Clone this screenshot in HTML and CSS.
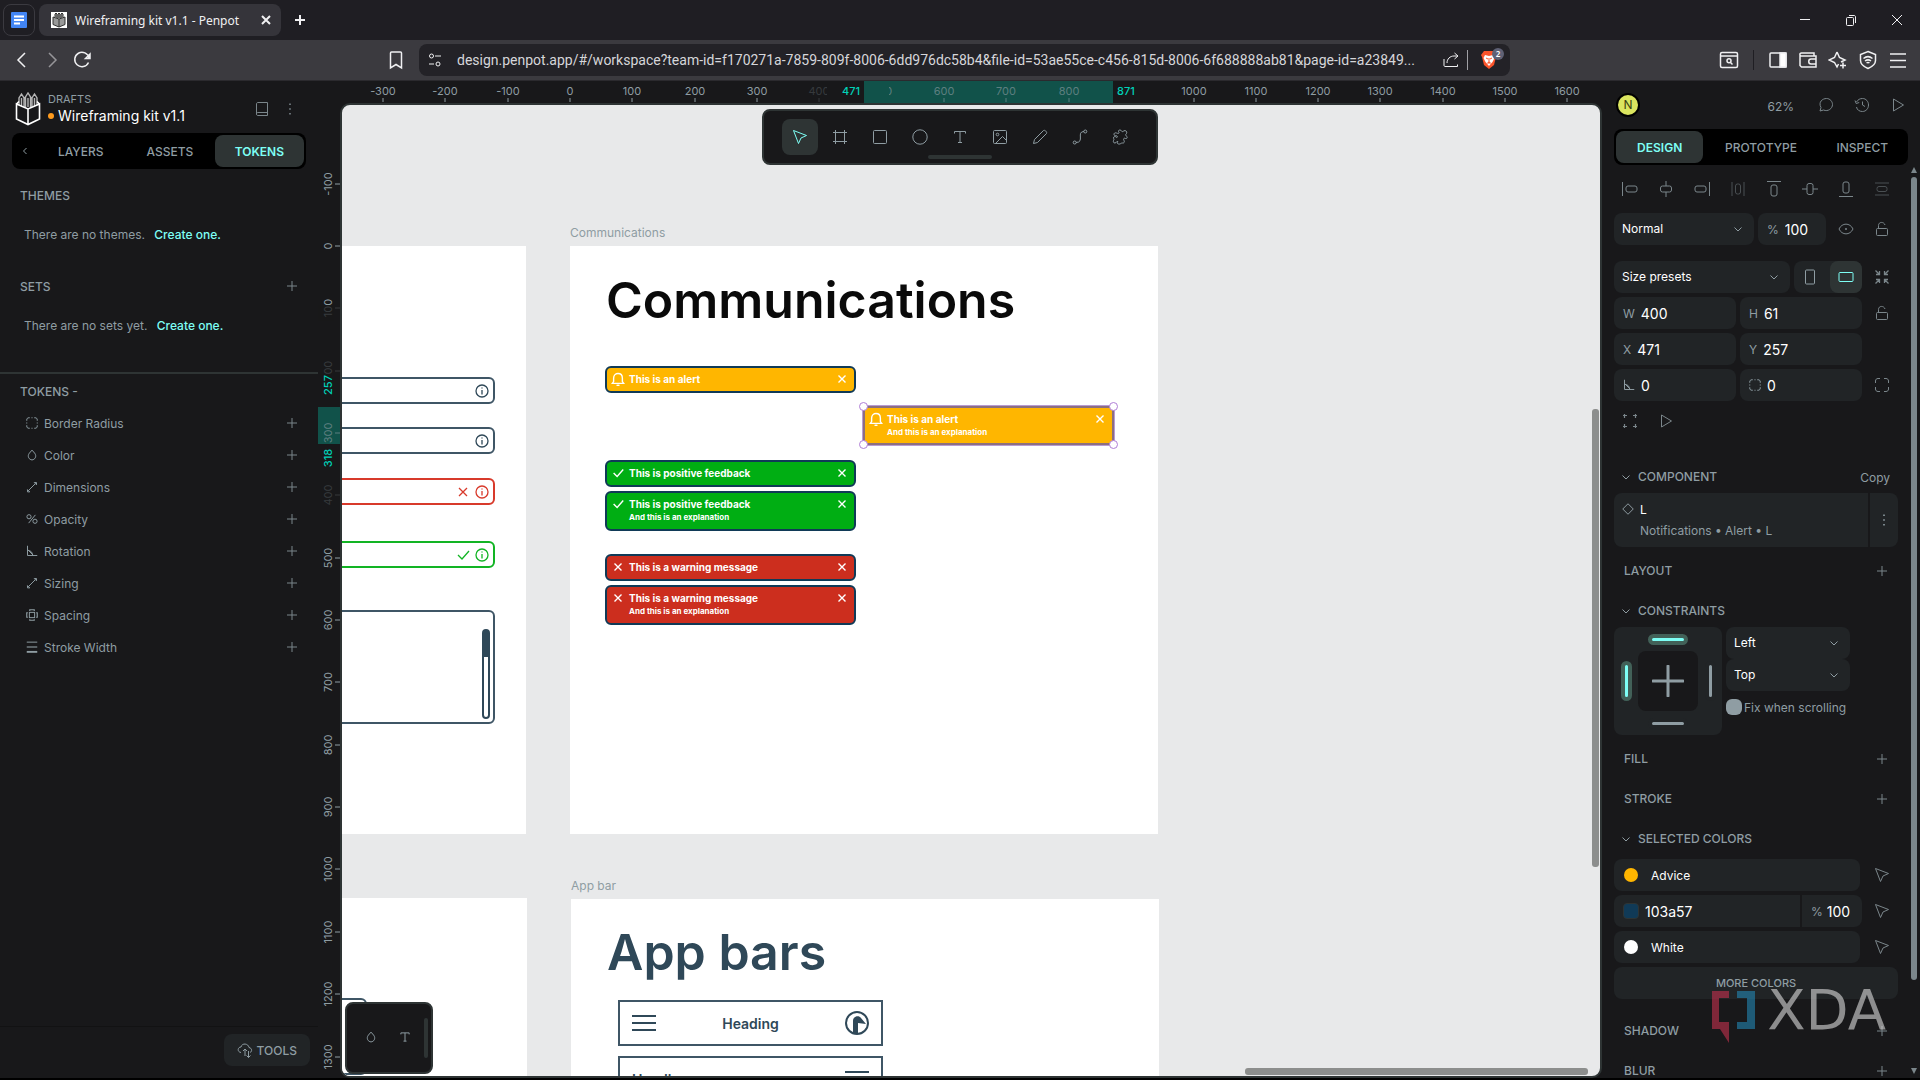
FILE: index.html
```html
<!DOCTYPE html>
<html lang="en">
<head>
    <meta charset="UTF-8">
    <meta name="viewport" content="width=device-width, initial-scale=1.0">
    <title>Wireframing kit v1.1 - Penpot</title>
    <link rel="stylesheet" href="styles.css">
</head>
<body>

    <!-- Shared icons -->
    <svg class="icon-defs" aria-hidden="true">
        <symbol id="i-plus" viewBox="0 0 16 16"><path d="M8 3v10M3 8h10"/></symbol>
        <symbol id="i-close" viewBox="0 0 16 16"><path d="M4 4l8 8M12 4l-8 8"/></symbol>
        <symbol id="i-check" viewBox="0 0 16 16"><path d="M3 8l4 4 7-8"/></symbol>
        <symbol id="i-down" viewBox="0 0 16 16"><path d="M4.500 6.500L8 10l3.500-3.500"/></symbol>
        <symbol id="i-left" viewBox="0 0 16 16"><path d="M9.500 5l-3 3 3 3"/></symbol>
        <symbol id="i-dots" viewBox="0 0 16 16"><path d="M8 2.500v1.500M8 7.200v1.500M8 12v1.500" stroke-width="1.600"/></symbol>
        <symbol id="i-book" viewBox="0 0 16 16"><path d="M2.500 13.500V3c0-1 .5-1.500 1.500-1.500h9.500v13H4c-1 0-1.500-.5-1.500-1.500s.5-1.500 1.500-1.500h9.500"/></symbol>
        <symbol id="i-radius" viewBox="0 0 16 16"><path d="M1 5V4c0-2 1-3 3-3h1M11 1h1c2 0 3 1 3 3v1M15 11v1c0 2-1 3-3 3h-1M5 15H4c-2 0-3-1-3-3v-1M1 7.300v1.400M15 7.300v1.400M7.300 1h1.400M7.300 15h1.400"/></symbol>
        <symbol id="i-corners" viewBox="0 0 16 16"><path d="M1.500 6V4C1.500 2.500 2.500 1.500 4 1.500h2M10 1.500h2c1.500 0 2.500 1 2.500 2.500v2M14.500 10v2c0 1.500-1 2.500-2.500 2.500h-2M6 14.500H4c-1.500 0-2.500-1-2.500-2.500v-2"/></symbol>
        <symbol id="i-drop" viewBox="0 0 16 16"><path d="M8 1.500l3.500 4C15 10 11.500 14.500 8 14.500S1 10 4.500 5.500z"/></symbol>
        <symbol id="i-line" viewBox="0 0 16 16"><path d="M3.500 12.500l9-9M2 11.500v3h3zM11 2h3v3z"/></symbol>
        <symbol id="i-percent" viewBox="0 0 16 16"><path d="M3.500 13.500l9-11"/><circle cx="4" cy="5" r="2.800"/><circle cx="12" cy="11" r="2.800"/></symbol>
        <symbol id="i-angle" viewBox="0 0 16 16"><path d="M2 1v13h13M2 7c4 0 7 3 7 7M2 6l8 8"/></symbol>
        <symbol id="i-spacing" viewBox="0 0 16 16"><rect x="4.500" y="4.500" width="7" height="7"/><path d="M5 2.500V1h6v1.500M5 13.500V15h6v-1.500M2.500 5H1v6h1.500M13.500 5H15v6h-1.500" stroke-width="1.500"/></symbol>
        <symbol id="i-strokes" viewBox="0 0 16 16"><path d="M1 1.500h14"/><path d="M1 8h14" stroke-width="1.500"/><path d="M1 14.500h14" stroke-width="2.500"/></symbol>
        <symbol id="i-cursor" viewBox="0 0 16 16"><path d="M1.500 1.500l13 5-5.500 2.500L6.500 14.500z"/></symbol>
        <symbol id="i-frame" viewBox="0 0 16 16"><path d="M3.500 1v14M12.500 1v14M1 3.500h14M1 12.500h14"/></symbol>
        <symbol id="i-rect" viewBox="0 0 16 16"><rect x="1.500" y="1.500" width="13" height="13" rx="1"/></symbol>
        <symbol id="i-circle" viewBox="0 0 16 16"><circle cx="8" cy="8" r="7.200"/></symbol>
        <symbol id="i-text" viewBox="0 0 16 16"><path d="M2.500 4.500v-2h11v2M8 2.500v11M6 13.500h4"/></symbol>
        <symbol id="i-image" viewBox="0 0 16 16"><rect x="1.500" y="1.500" width="13" height="13" rx="1"/><circle cx="5.500" cy="5.500" r="1.300"/><path d="M3.500 14.500l7-7 4 4"/></symbol>
        <symbol id="i-pencil" viewBox="0 0 16 16"><path d="M1.500 14.500l1-4 9-9c1-1 4 1.500 3 3l-9 9z"/></symbol>
        <symbol id="i-curve" viewBox="0 0 16 16"><path d="M4 13.500c9 0 0-11 8-11"/><circle cx="2.700" cy="13.500" r="1.500"/><circle cx="13.300" cy="2.500" r="1.500"/></symbol>
        <symbol id="i-puzzle" viewBox="0 0 16 16"><path d="M2 5.500c0-1.500 1-2 2.500-1.500 2 1 3.500 0 2-1.500C6 .8 9 .5 9.500 2c.5 1.200 1.500.5 2.500-.2 1.500-1 3.500 1 2.500 2.700-.7 1-1.500 1.500-.3 2.300C16 8 15 10 13.500 9.500c-1.500-1-2.500.5-1.500 2 .8 1.500 0 2.800-1.500 2.500-1.500-.2-2 1.500-4 1-1.500-.2-1.500-2-.7-2.500-1.500-.7-1.300 1.500-2.800 1.500-1.500.2-2-1.500-1.500-2.500 1-1.500 0-1.500 0-2.500 0-1.500 1.700-2 2.500-1 1.500 1.300 2-1 .5-1.300C3 6.700 2 6.500 2 5.500z"/></symbol>
        <symbol id="i-play" viewBox="0 0 16 16"><path d="M3.500 2v12l10-6z"/></symbol>
        <symbol id="i-bubble" viewBox="0 0 16 16"><path d="M2 14l1-3.500C0 5 4.500 1.500 8.500 1.500c3.500 0 6 3 6 6 0 4-4.500 7.500-9 5.500z"/></symbol>
        <symbol id="i-history" viewBox="0 0 16 16"><path d="M2.500 5C4 2.500 6 1.500 8.500 1.500c3.500 0 6 3 6 6.500s-2.500 6.500-6 6.500C5.500 14.500 3 13 2.500 10M1 3.500l1.200 3 3-1M8.500 4.500V8l2.500 1.500"/></symbol>
        <symbol id="i-eye" viewBox="0 0 16 16"><path d="M1 8c3-6.500 11-6.500 14 0-3 6.500-11 6.500-14 0z"/><circle cx="8" cy="8" r=".7"/></symbol>
        <symbol id="i-lock" viewBox="0 0 16 16"><rect x="2.500" y="7.500" width="11" height="7" rx="1"/><path d="M4.500 7.500V4.500c0-4 5.500-4 6.500-.5"/></symbol>
        <symbol id="i-al" viewBox="0 0 16 16"><path d="M.5 1v14"/><rect x="4" y="5" width="11" height="6" rx="2"/></symbol>
        <symbol id="i-ac" viewBox="0 0 16 16"><path d="M8 0v5M8 11v5"/><rect x="2.500" y="5" width="11" height="6" rx="2"/></symbol>
        <symbol id="i-dist" viewBox="0 0 16 16"><path d="M2 1v14M14 1v14"/><rect x="5.500" y="3" width="5" height="10" rx="2"/></symbol>
        <symbol id="i-phone" viewBox="0 0 16 16"><rect x="3.500" y="1" width="9" height="14" rx="1"/></symbol>
        <symbol id="i-shrink" viewBox="0 0 16 16"><path d="M1.500 1.500l4 4M5.500 2v3.500H2M14.500 1.500l-4 4M10.500 2v3.500H14M1.500 14.500l4-4M2 10.500h3.500V14M14.500 14.500l-4-4M14 10.500h-3.500V14" stroke-width="1.300"/></symbol>
        <symbol id="i-clip" viewBox="0 0 16 16"><path d="M1 2.500h4M2.500 1v4M11 2.500h4M13.500 1v4M1 13.500h4M2.500 11v4M11 13.500h4M13.500 11v4" stroke-width="1.200"/></symbol>
        <symbol id="i-diamond" viewBox="0 0 16 16"><path d="M8 1l7 7-7 7-7-7z"/></symbol>
        <symbol id="i-info" viewBox="0 0 16 16"><circle cx="8" cy="8" r="6"/><path d="M8 7v4.500M8 4.500v1"/></symbol>
        <symbol id="i-bell" viewBox="0 0 16 16"><path d="M1.500 13h13l-1.500-2V7c0-7-10-7-10 0v4zM6.500 14.500c1 1.200 2 1.200 3 0"/></symbol>
        <symbol id="i-cloud" viewBox="0 0 16 16"><path d="M4 10.500C0 10 .5 5 4 5c1-4.500 7.500-3.500 8 .5 3 .5 3.500 4 1 5M8 14V7M6 9l2-2 2 2M11.500 9v6.500M9.500 13.500l2 2 2-2"/></symbol>
        <symbol id="i-menu" viewBox="0 0 24 16"><path d="M0 1h24M0 8h24M0 15h24"/></symbol>
    </svg>

    <!-- Browser window -->
    <header class="browser">
        <div class="tab-strip">
            <button class="pinned-tab" aria-label="Docs">
                <svg width="16" height="16" viewBox="0 0 16 16"><rect width="16" height="16" rx="1" fill="#4285f4"/><path d="M3 4.500h10M3 8h10M3 11.500h6" stroke="#fff" stroke-width="2"/></svg>
            </button>
            <div class="tab">
                <svg width="16" height="16" viewBox="0 0 16 16"><rect width="16" height="16" fill="#fff"/><path d="M2 5l6 2 6-2v7.500L8 15l-6-2.500zM8 7v8M4 5V2l1-1 1 1v4M7 6V2l1-1 1 1v4M10 6V2l1-1 1 1v3" fill="#999" stroke="#333"/></svg>
                <span>Wireframing kit v1.1 - Penpot</span>
                <button class="chrome-btn" aria-label="Close tab"><svg class="icon bold"><use href="#i-close"/></svg></button>
            </div>
            <button class="chrome-btn" aria-label="New tab"><svg class="icon bold"><use href="#i-plus"/></svg></button>
            <div class="window-controls">
                <button class="chrome-btn" aria-label="Minimize"><svg class="icon" viewBox="0 0 16 16"><path d="M3 7.500h10"/></svg></button>
                <button class="chrome-btn" aria-label="Restore"><svg class="icon" viewBox="0 0 16 16"><rect x="3.500" y="5.500" width="7" height="8" rx="1"/><path d="M6 3.500h5c1 0 1.500.5 1.500 1.500v6"/></svg></button>
                <button class="chrome-btn" aria-label="Close window"><svg class="icon" viewBox="0 0 16 16"><path d="M3 3l10 10M13 3L3 13"/></svg></button>
            </div>
        </div>
        <div class="nav-bar">
            <div class="nav-buttons">
                <button class="chrome-btn" aria-label="Back"><svg class="icon nav" viewBox="0 0 20 20"><path d="M13 3l-7 7 7 7"/></svg></button>
                <button class="chrome-btn faded" aria-label="Forward"><svg class="icon nav" viewBox="0 0 20 20"><path d="M7 3l7 7-7 7"/></svg></button>
                <button class="chrome-btn" aria-label="Reload"><svg class="icon nav" viewBox="0 0 20 20"><path d="M16.500 12.500A7.200 7.200 0 1 1 17 8M18 4v4.500h-4.500z"/></svg></button>
            </div>
            <button class="chrome-btn" aria-label="Bookmark"><svg class="icon nav" viewBox="0 0 20 20"><path d="M4.500 3c0-.5.500-1 1-1h9c.500 0 1 .5 1 1v15L10 14.500 4.500 18z"/></svg></button>
            <div class="address">
                <svg class="icon" viewBox="0 0 16 16"><path d="M8 4h6M2 12h5"/><circle cx="4.500" cy="4" r="2"/><circle cx="11" cy="12" r="2"/></svg>
                <input class="url" type="text" aria-label="Address" value="design.penpot.app/#/workspace?team-id=f170271a-7859-809f-8006-6dd976dc58b4&amp;file-id=53ae55ce-c456-815d-8006-6f688888ab81&amp;page-id=a23849...">
                <button class="chrome-btn small" aria-label="Share"><svg class="icon" viewBox="0 0 16 16"><path d="M1 7v6.500c0 .5.500 1 1 1h12.500v-2M4 11c0-4 3-7 7-7h3.500M11.500 1L15 4l-3.500 3"/></svg></button>
                <span class="divider"></span>
                <button class="brave" aria-label="Shields">
                    <svg width="18" height="20" viewBox="0 0 18 20"><path d="M4 1h10l3 4-1 2-2 8-5 4-5-4-2-8-1-2z" fill="#fb542b"/><path d="M5 5l4 1 4-1 1.500 3-2 4-3.500 4-3.500-4-2-4z" fill="#fff"/><path d="M6 8l2 1M12 8l-2 1M9 8v4l-1.500 1h3L9 12" stroke="#fb542b" fill="none"/></svg>
                    <span class="brave-count">2</span>
                </button>
            </div>
            <div class="extensions">
                <button class="chrome-btn" aria-label="Search tabs"><svg class="icon nav" viewBox="0 0 20 20"><rect x="1.500" y="2.500" width="17" height="15" rx="1.500"/><path d="M1.500 6h17M11.500 12.500l2 2"/><circle cx="10" cy="10.700" r="2"/></svg></button>
                <span class="divider dark"></span>
                <button class="chrome-btn" aria-label="Sidebar"><svg class="icon nav" viewBox="0 0 20 20"><rect x="2" y="3" width="16" height="14" rx="1"/><path d="M12 3h6v14h-6z" fill="#fff"/></svg></button>
                <button class="chrome-btn" aria-label="Wallet"><svg class="icon nav" viewBox="0 0 20 20"><path d="M16 6V3H3.500C1 3 1.500 6 4 6h14v11H3.500L2 15.500V4.500M18 9h-5c-3 0-3 5 0 5h5"/></svg></button>
                <button class="chrome-btn" aria-label="Leo AI"><svg class="icon nav" viewBox="0 0 20 20"><path d="M9 2l2.500 5.500L17 10l-4 2M9 2L6.500 7.500 1 10l5.500 2.500L9 17l1.500-3M15 12.500v6M12 15.500h6"/></svg></button>
                <button class="chrome-btn" aria-label="VPN"><svg class="icon nav" viewBox="0 0 20 20"><path d="M10 1.500l7.500 3v6c0 4-4 6.500-7.500 8-3.500-1.500-7.500-4-7.500-8v-6zM5.500 8.500c3-2.500 6-2.500 9 0M7 11c2-1.500 4-1.500 6 0M8.500 13c1-.7 2-.7 3 0"/></svg></button>
                <button class="chrome-btn" aria-label="Menu"><svg class="icon nav" viewBox="0 0 20 20"><path d="M2 4h16M2 10.500h16M2 17h16"/></svg></button>
            </div>
        </div>
    </header>

    <main class="workspace">

        <!-- Left sidebar -->
        <aside class="left-sidebar">
            <div class="file-header">
                <svg class="logo" viewBox="0 0 26 34"><path d="M4 13V6l2.500-4L9 6v9M9 7l1.500-2M10.500 15.500V5L13 1l2.500 4v10.500M15.500 5L17 7M17 15V6l2.500-4L22 6v7M6.500 6v8M13 6v9M19.500 6v8" fill="none" stroke="#b5b5b5" stroke-width="1.400"/><path d="M1.500 12l11.500 5 11.500-5v15L13 32.500 1.500 27zM13 17v15M1.500 12L4 9.500M24.500 12L22 9.500" fill="none" stroke="#fff" stroke-width="1.600"/></svg>
                <div class="file-name">
                    <a class="project" href="#">DRAFTS</a>
                    <h1><span class="unsaved"></span>Wireframing kit v1.1</h1>
                </div>
                <button class="icon-btn" aria-label="Library"><svg class="icon"><use href="#i-book"/></svg></button>
                <button class="icon-btn" aria-label="File menu"><svg class="icon"><use href="#i-dots"/></svg></button>
            </div>
            <nav class="tabs">
                <button class="collapse" aria-label="Collapse"><svg class="icon"><use href="#i-left"/></svg></button>
                <button>LAYERS</button>
                <button>ASSETS</button>
                <button class="active">TOKENS</button>
            </nav>
            <section class="token-sets">
                <div class="side-title"><h2>THEMES</h2></div>
                <p class="empty">There are no themes. <a href="#">Create one.</a></p>
                <div class="side-title"><h2>SETS</h2><button class="icon-btn" aria-label="Add set"><svg class="icon"><use href="#i-plus"/></svg></button></div>
                <p class="empty">There are no sets yet. <a href="#">Create one.</a></p>
            </section>
            <section class="token-list">
                <h2>TOKENS -</h2>
                <ul>
                    <li><svg class="icon"><use href="#i-radius"/></svg><span>Border Radius</span><button class="icon-btn" aria-label="Add border radius"><svg class="icon"><use href="#i-plus"/></svg></button></li>
                    <li><svg class="icon"><use href="#i-drop"/></svg><span>Color</span><button class="icon-btn" aria-label="Add color"><svg class="icon"><use href="#i-plus"/></svg></button></li>
                    <li><svg class="icon"><use href="#i-line"/></svg><span>Dimensions</span><button class="icon-btn" aria-label="Add dimension"><svg class="icon"><use href="#i-plus"/></svg></button></li>
                    <li><svg class="icon"><use href="#i-percent"/></svg><span>Opacity</span><button class="icon-btn" aria-label="Add opacity"><svg class="icon"><use href="#i-plus"/></svg></button></li>
                    <li><svg class="icon"><use href="#i-angle"/></svg><span>Rotation</span><button class="icon-btn" aria-label="Add rotation"><svg class="icon"><use href="#i-plus"/></svg></button></li>
                    <li><svg class="icon"><use href="#i-line"/></svg><span>Sizing</span><button class="icon-btn" aria-label="Add sizing"><svg class="icon"><use href="#i-plus"/></svg></button></li>
                    <li><svg class="icon"><use href="#i-spacing"/></svg><span>Spacing</span><button class="icon-btn" aria-label="Add spacing"><svg class="icon"><use href="#i-plus"/></svg></button></li>
                    <li><svg class="icon"><use href="#i-strokes"/></svg><span>Stroke Width</span><button class="icon-btn" aria-label="Add stroke width"><svg class="icon"><use href="#i-plus"/></svg></button></li>
                </ul>
            </section>
            <footer class="side-footer">
                <button class="tools"><svg class="icon"><use href="#i-cloud"/></svg>TOOLS</button>
            </footer>
        </aside>

        <!-- Viewport with rulers -->
        <section class="viewport">
            <svg class="ruler-x">
                <path class="tick" d="M65 17v4M127 17v4M190 17v4M252 17v4M314 17v4M377 17v4M439 17v4M876 17v4M938 17v4M1000 17v4M1062 17v4M1125 17v4M1187 17v4M1249 17v4"/>
                <text x="65" y="14">-300</text><text x="127" y="14">-200</text><text x="190" y="14">-100</text>
                <text x="252" y="14">0</text><text x="314" y="14">100</text><text x="377" y="14">200</text><text x="439" y="14">300</text>
                <g class="dim"><path class="tick" d="M501 17v4"/><text x="501" y="14">400</text></g>
                <rect class="mask" x="509" y="0" width="37" height="16"/>
                <rect class="range" x="546" y="0" width="249" height="22"/>
                <g class="on-range"><path class="tick" d="M626 17v4M688 17v4M751 17v4"/><text x="564" y="14">500</text><text x="626" y="14">600</text><text x="688" y="14">700</text><text x="751" y="14">800</text></g>
                <rect class="range" x="546" y="0" width="25" height="22"/>
                <text class="bound" x="533" y="14">471</text><text class="bound" x="808" y="14">871</text>
                <text x="876" y="14">1000</text><text x="938" y="14">1100</text><text x="1000" y="14">1200</text><text x="1062" y="14">1300</text>
                <text x="1125" y="14">1400</text><text x="1187" y="14">1500</text><text x="1249" y="14">1600</text>
            </svg>
            <svg class="ruler-y">
                <path class="tick" d="M17 81h5M17 143h5M17 455h5M17 517h5M17 579h5M17 642h5M17 704h5M17 766h5M17 829h5M17 891h5M17 954h5"/>
                <rect class="range" x="0" y="304" width="22" height="37"/>
                <g class="on-range"><path class="tick" d="M17 330h5"/></g>
                <g class="dim"><path class="tick" d="M17 205h5M17 268h5M17 392h5"/></g>
                <g transform="rotate(-90)">
                    <text x="-81" y="14">-100</text><text x="-143" y="14">0</text>
                    <text x="-205" y="14">100</text>
                    <rect class="fade" x="-218" y="0" width="16" height="16"/>
                    <text class="dim" x="-268" y="14">200</text>
                    <rect class="mask" x="-294" y="0" width="23" height="17"/>
                    <text class="bound" x="-282" y="14">257</text>
                    <text class="on-range" x="-330" y="14">300</text>
                    <text class="bound" x="-355" y="14">318</text>
                    <text class="dim" x="-392" y="14">400</text>
                    <text x="-455" y="14">500</text><text x="-517" y="14">600</text><text x="-579" y="14">700</text><text x="-642" y="14">800</text>
                    <text x="-704" y="14">900</text><text x="-766" y="14">1000</text><text x="-829" y="14">1100</text><text x="-891" y="14">1200</text><text x="-954" y="14">1300</text>
                </g>
            </svg>

            <div class="canvas">
                <div class="board board-inputs">
                    <div class="field field-1"><svg class="icon"><use href="#i-info"/></svg></div>
                    <div class="field field-2"><svg class="icon"><use href="#i-info"/></svg></div>
                    <div class="field field-3 error"><svg class="icon"><use href="#i-close"/></svg><svg class="icon"><use href="#i-info"/></svg></div>
                    <div class="field field-4 valid"><svg class="icon"><use href="#i-check"/></svg><svg class="icon"><use href="#i-info"/></svg></div>
                    <div class="field field-area"><div class="area-scroll"><div class="area-thumb"></div></div></div>
                </div>

                <span class="board-label label-comm">Communications</span>
                <div class="board board-comm">
                    <h2>Communications</h2>
                    <div class="alert advice a-1"><svg class="icon"><use href="#i-bell"/></svg><p>This is an alert</p><svg class="icon"><use href="#i-close"/></svg></div>
                    <div class="alert positive a-2"><svg class="icon"><use href="#i-check"/></svg><p>This is positive feedback</p><svg class="icon"><use href="#i-close"/></svg></div>
                    <div class="alert positive tall a-3"><svg class="icon"><use href="#i-check"/></svg><p>This is positive feedback<small>And this is an explanation</small></p><svg class="icon"><use href="#i-close"/></svg></div>
                    <div class="alert warning a-4"><svg class="icon"><use href="#i-close"/></svg><p>This is a warning message</p><svg class="icon"><use href="#i-close"/></svg></div>
                    <div class="alert warning tall a-5"><svg class="icon"><use href="#i-close"/></svg><p>This is a warning message<small>And this is an explanation</small></p><svg class="icon"><use href="#i-close"/></svg></div>
                    <div class="alert advice tall selected">
                        <svg class="icon"><use href="#i-bell"/></svg><p>This is an alert<small>And this is an explanation</small></p><svg class="icon"><use href="#i-close"/></svg>
                        <i class="handle tl"></i><i class="handle tr"></i><i class="handle bl"></i><i class="handle br"></i>
                    </div>
                </div>

                <div class="board board-lower"><div class="lower-shape"></div></div>

                <span class="board-label label-appbar">App bar</span>
                <div class="board board-appbar">
                    <h2>App bars</h2>
                    <div class="appbar">
                        <svg class="menu"><use href="#i-menu"/></svg>
                        <span>Heading</span>
                        <svg class="face" viewBox="0 0 24 24"><circle cx="12" cy="12" r="11" fill="#fff" stroke="#2f4858" stroke-width="2"/><path d="M8 23V10c0-5 6-6 8-3l5 6-8-1v11z" fill="#2f4858"/></svg>
                    </div>
                    <div class="appbar">
                        <span>Heading</span>
                        <svg class="menu"><use href="#i-menu"/></svg>
                    </div>
                </div>

                <div class="toolbar">
                    <div class="tool-row">
                        <button class="active" aria-label="Move"><svg class="icon"><use href="#i-cursor"/></svg></button>
                        <button aria-label="Board"><svg class="icon"><use href="#i-frame"/></svg></button>
                        <button aria-label="Rectangle"><svg class="icon"><use href="#i-rect"/></svg></button>
                        <button aria-label="Ellipse"><svg class="icon"><use href="#i-circle"/></svg></button>
                        <button aria-label="Text"><svg class="icon"><use href="#i-text"/></svg></button>
                        <button aria-label="Image"><svg class="icon"><use href="#i-image"/></svg></button>
                        <button aria-label="Curve"><svg class="icon"><use href="#i-pencil"/></svg></button>
                        <button aria-label="Path"><svg class="icon"><use href="#i-curve"/></svg></button>
                        <button aria-label="Plugins"><svg class="icon"><use href="#i-puzzle"/></svg></button>
                    </div>
                    <div class="grip"></div>
                </div>

                <div class="palette">
                    <button aria-label="Color palette"><svg class="icon"><use href="#i-drop"/></svg></button>
                    <button aria-label="Typographies"><svg class="icon"><use href="#i-text"/></svg></button>
                    <div class="grip-v"></div>
                </div>
                <div class="scroll-y"></div>
                <div class="scroll-x"></div>
            </div>
        </section>

        <!-- Right sidebar -->
        <aside class="right-sidebar">
            <div class="user-header">
                <span class="avatar">N</span>
                <button class="zoom">62%</button>
                <button class="icon-btn" aria-label="Comments"><svg class="icon"><use href="#i-bubble"/></svg></button>
                <button class="icon-btn" aria-label="History"><svg class="icon"><use href="#i-history"/></svg></button>
                <button class="icon-btn" aria-label="View mode"><svg class="icon"><use href="#i-play"/></svg></button>
            </div>
            <nav class="tabs">
                <button class="active">DESIGN</button>
                <button class="wide">PROTOTYPE</button>
                <button>INSPECT</button>
            </nav>
            <div class="design-scroll">
                <div class="design">
                    <div class="row align">
                        <button class="icon-btn" aria-label="Align left"><svg class="icon"><use href="#i-al"/></svg></button>
                        <button class="icon-btn" aria-label="Align center"><svg class="icon"><use href="#i-ac"/></svg></button>
                        <button class="icon-btn" aria-label="Align right"><svg class="icon r180"><use href="#i-al"/></svg></button>
                        <button class="icon-btn faded" aria-label="Distribute horizontally"><svg class="icon"><use href="#i-dist"/></svg></button>
                        <button class="icon-btn" aria-label="Align top"><svg class="icon r90"><use href="#i-al"/></svg></button>
                        <button class="icon-btn" aria-label="Align middle"><svg class="icon r90"><use href="#i-ac"/></svg></button>
                        <button class="icon-btn" aria-label="Align bottom"><svg class="icon r270"><use href="#i-al"/></svg></button>
                        <button class="icon-btn faded" aria-label="Distribute vertically"><svg class="icon r90"><use href="#i-dist"/></svg></button>
                    </div>
                    <div class="row blend">
                        <div class="select span-4"><select aria-label="Blend mode"><option>Normal</option></select><svg class="icon"><use href="#i-down"/></svg></div>
                        <label class="input span-2"><span>%</span><input type="text" value="100"></label>
                        <button class="icon-btn" aria-label="Toggle visibility"><svg class="icon"><use href="#i-eye"/></svg></button>
                        <button class="icon-btn" aria-label="Lock layer"><svg class="icon"><use href="#i-lock"/></svg></button>
                    </div>
                    <div class="row">
                        <div class="select span-5"><select aria-label="Size presets"><option>Size presets</option></select><svg class="icon"><use href="#i-down"/></svg></div>
                        <div class="switch span-2">
                            <button aria-label="Vertical"><svg class="icon"><use href="#i-phone"/></svg></button>
                            <button class="active" aria-label="Horizontal"><svg class="icon r90"><use href="#i-phone"/></svg></button>
                        </div>
                        <button class="icon-btn" aria-label="Fit to content"><svg class="icon"><use href="#i-shrink"/></svg></button>
                    </div>
                    <div class="row">
                        <div class="pair span-7">
                            <label class="input"><span>W</span><input type="text" value="400"></label>
                            <label class="input"><span>H</span><input type="text" value="61"></label>
                        </div>
                        <button class="icon-btn" aria-label="Lock ratio"><svg class="icon"><use href="#i-lock"/></svg></button>
                    </div>
                    <div class="row">
                        <div class="pair span-7">
                            <label class="input"><span>X</span><input type="text" value="471"></label>
                            <label class="input"><span>Y</span><input type="text" value="257"></label>
                        </div>
                    </div>
                    <div class="row">
                        <div class="pair span-7">
                            <label class="input"><svg class="icon small"><use href="#i-angle"/></svg><input type="text" aria-label="Rotation" value="0"></label>
                            <label class="input"><svg class="icon small"><use href="#i-radius"/></svg><input type="text" aria-label="Radius" value="0"></label>
                        </div>
                        <button class="icon-btn" aria-label="All corners"><svg class="icon"><use href="#i-corners"/></svg></button>
                    </div>
                    <div class="row">
                        <button class="icon-btn" aria-label="Clip content"><svg class="icon"><use href="#i-clip"/></svg></button>
                        <button class="icon-btn" aria-label="Show in view mode"><svg class="icon"><use href="#i-play"/></svg></button>
                    </div>

                    <div class="title after-measures"><svg class="icon"><use href="#i-down"/></svg><h2>COMPONENT</h2><span class="copy">Copy</span></div>
                    <div class="component">
                        <div class="component-name">
                            <svg class="icon small"><use href="#i-diamond"/></svg>
                            <p>L<span>Notifications • Alert • L</span></p>
                        </div>
                        <button aria-label="Component menu"><svg class="icon"><use href="#i-dots"/></svg></button>
                    </div>

                    <div class="title"><h2>LAYOUT</h2><button class="icon-btn" aria-label="Add layout"><svg class="icon"><use href="#i-plus"/></svg></button></div>

                    <div class="title"><svg class="icon"><use href="#i-down"/></svg><h2>CONSTRAINTS</h2></div>
                    <div class="constraints">
                        <div class="constraint-box">
                            <button class="bar-h top on" aria-label="Top"></button>
                            <button class="bar-v left on" aria-label="Left"></button>
                            <div class="middle"><svg viewBox="0 0 32 32"><path d="M16 1v30M1 16h30"/></svg></div>
                            <button class="bar-v right" aria-label="Right"></button>
                            <button class="bar-h bottom" aria-label="Bottom"></button>
                        </div>
                        <div class="constraint-options">
                            <div class="select"><select aria-label="Horizontal constraint"><option>Left</option></select><svg class="icon"><use href="#i-down"/></svg></div>
                            <div class="select"><select aria-label="Vertical constraint"><option>Top</option></select><svg class="icon"><use href="#i-down"/></svg></div>
                            <label class="fix"><input type="checkbox">Fix when scrolling</label>
                        </div>
                    </div>

                    <div class="title"><h2>FILL</h2><button class="icon-btn" aria-label="Add fill"><svg class="icon"><use href="#i-plus"/></svg></button></div>
                    <div class="title"><h2>STROKE</h2><button class="icon-btn" aria-label="Add stroke"><svg class="icon"><use href="#i-plus"/></svg></button></div>

                    <div class="title"><svg class="icon"><use href="#i-down"/></svg><h2>SELECTED COLORS</h2></div>
                    <div class="colors">
                        <div class="row">
                            <div class="color-name span-7"><i class="dot advice"></i>Advice</div>
                            <button class="icon-btn" aria-label="Select Advice"><svg class="icon"><use href="#i-cursor"/></svg></button>
                        </div>
                        <div class="row">
                            <div class="hex span-7">
                                <label class="hex-value"><i class="square"></i><input type="text" aria-label="Color" value="103a57"></label>
                                <label class="hex-opacity"><span>%</span><input type="text" value="100"></label>
                            </div>
                            <button class="icon-btn" aria-label="Select 103a57"><svg class="icon"><use href="#i-cursor"/></svg></button>
                        </div>
                        <div class="row">
                            <div class="color-name span-7"><i class="dot white"></i>White</div>
                            <button class="icon-btn" aria-label="Select White"><svg class="icon"><use href="#i-cursor"/></svg></button>
                        </div>
                        <button class="more">MORE COLORS</button>
                    </div>

                    <div class="title"><h2>SHADOW</h2><button class="icon-btn" aria-label="Add shadow"><svg class="icon"><use href="#i-plus"/></svg></button></div>
                    <div class="title"><h2>BLUR</h2><button class="icon-btn" aria-label="Add blur"><svg class="icon"><use href="#i-plus"/></svg></button></div>
                </div>
                <div class="scrollbar"><i class="arrow-up"></i><i class="thumb"></i><i class="arrow-down"></i></div>
            </div>
            <div class="watermark">
                <svg width="43" height="53" viewBox="0 0 43 53"><path d="M0 0h17v7H7v24h10v21L8 38H0z" fill="#c4314f"/><path d="M25 0h18v38H25v-7h10V7H25z" fill="#2387b4"/></svg>
                <span>XDA</span>
            </div>
        </aside>
    </main>

</body>
</html>
```

FILE: styles.css
```css
* {
    box-sizing: border-box;
}

body {
    margin: 0;
    height: 100vh;
    display: flex;
    flex-direction: column;
    overflow: hidden;
    background-color: #000;
    color: #8f9da3;
    font-family: Inter, "Liberation Sans", sans-serif;
    font-size: 12px;
}

h1, h2, p, ul {
    margin: 0;
    padding: 0;
    font-weight: 400;
}

button, input, select {
    font: inherit;
    color: inherit;
    background: none;
    border: none;
    padding: 0;
    margin: 0;
    min-width: 0;
}

a {
    color: inherit;
    text-decoration: none;
}

.icon-defs {
    display: none;
}

.icon {
    width: 16px;
    height: 16px;
    flex: none;
    fill: none;
    stroke: currentColor;
}

.icon.small {
    width: 12px;
    height: 12px;
    stroke-width: 1.3;
}

.icon.nav {
    width: 20px;
    height: 20px;
    stroke-width: 1.5;
}

.icon.bold {
    stroke-width: 2;
}

.r90 { transform: rotate(90deg); }
.r180 { transform: rotate(180deg); }
.r270 { transform: rotate(270deg); }

/* Browser window */
.browser {
    font-family: "Noto Sans", "Open Sans", sans-serif;
    color: #f0f0f2;
}

.tab-strip {
    height: 40px;
    display: flex;
    align-items: center;
    gap: 4px;
    padding: 0 8px 0 3px;
    background-color: #1f1e23;
}

.pinned-tab {
    width: 32px;
    height: 32px;
    display: grid;
    place-items: center;
    border: 1px solid #3b3a40;
    border-radius: 8px;
}

.tab {
    width: 242px;
    height: 32px;
    display: flex;
    align-items: center;
    gap: 8px;
    padding: 0 0 0 12px;
    border-radius: 8px;
    background-color: #35343a;
    font-size: 12px;
    white-space: nowrap;
}

.tab span {
    flex: 1;
}

.chrome-btn {
    width: 30px;
    height: 32px;
    display: grid;
    place-items: center;
    flex: none;
}

.chrome-btn.small {
    width: 20px;
}

.faded {
    opacity: 0.5;
}

.window-controls {
    display: flex;
    gap: 16px;
    margin-left: auto;
}

.nav-bar {
    height: 41px;
    display: flex;
    align-items: center;
    padding: 0 7px;
    background-color: #3b3a3f;
    border-bottom: 1px solid #2b2a2e;
}

.nav-buttons {
    flex: 375;
    display: flex;
}

.address {
    flex: 1080;
    height: 32px;
    display: flex;
    align-items: center;
    gap: 6px;
    margin-left: 8px;
    padding: 0 6px 0 8px;
    border-radius: 8px;
    background-color: #232227;
}

.url {
    flex: 1;
    margin-left: 8px;
    font-family: Roboto, "Noto Sans", sans-serif;
    font-size: 14px;
    color: #d6d6da;
}

.divider {
    width: 1px;
    height: 20px;
    background-color: #a0a0a5;
}

.divider.dark {
    margin: 0 9px;
    background-color: #1f1e23;
}

.brave {
    position: relative;
    width: 30px;
    height: 32px;
    display: grid;
    place-items: center;
}

.brave-count {
    position: absolute;
    top: 4px;
    right: 0;
    width: 12px;
    height: 12px;
    border-radius: 6px;
    background-color: #5f6175;
    font-size: 8px;
    line-height: 12px;
    font-weight: 600;
    color: #fff;
}

.extensions {
    flex: 404;
    display: flex;
    align-items: center;
    justify-content: flex-end;
}

/* Workspace layout */
.workspace {
    flex: 1;
    min-height: 0;
    display: grid;
    grid-template-columns: 318px 1fr 318px;
    margin-bottom: 2px;
    background-color: #18181a;
}

.icon-btn {
    width: 32px;
    height: 32px;
    display: grid;
    place-items: center;
    flex: none;
    color: #7b868b;
}

.tabs {
    display: flex;
    height: 36px;
    margin: 0 12px;
    padding: 2px;
    border-radius: 8px;
    background-color: #000;
}

.tabs button {
    flex: 1;
    border-radius: 8px;
    font-weight: 500;
}

.tabs .wide {
    flex: 1 0 28px;
}

.tabs .active {
    background-color: #2e3434;
    color: #7efff5;
    font-weight: 600;
}

.tabs .collapse {
    flex: 0 0 22px;
    display: grid;
    place-items: center;
}

h2 {
    font-size: 12px;
    font-weight: 500;
}

/* Left sidebar */
.left-sidebar {
    display: flex;
    flex-direction: column;
    min-height: 0;
}

.file-header {
    height: 52px;
    display: flex;
    align-items: center;
    padding: 4px 14px 0 15px;
}

.file-header .icon-btn {
    width: 28px;
}

.logo {
    width: 26px;
    height: 34px;
}

.file-name {
    flex: 1;
    margin-left: 7px;
}

.project {
    display: block;
    font-size: 11px;
    line-height: 14px;
}

.file-name h1 {
    display: flex;
    align-items: center;
    gap: 4px;
    font-size: 14px;
    line-height: 20px;
    color: #fff;
    white-space: nowrap;
}

.unsaved {
    width: 6px;
    height: 6px;
    border-radius: 3px;
    background-color: #fe9b1e;
}

.token-sets {
    height: 205px;
    border-bottom: 2px solid #2e3434;
    padding-top: 10px;
}

.side-title {
    height: 32px;
    display: flex;
    align-items: center;
    justify-content: space-between;
    padding: 0 10px 0 20px;
}

.empty {
    height: 59px;
    padding: 15px 24px;
    line-height: 18px;
}

.empty a {
    margin-left: 6px;
    color: #7efff5;
    font-weight: 500;
}

.token-list {
    flex: 1;
}

.token-list h2 {
    height: 33px;
    padding: 9px 20px;
    line-height: 18px;
}

.token-list ul {
    list-style: none;
}

.token-list li {
    height: 32px;
    display: flex;
    align-items: center;
    gap: 6px;
    padding: 0 10px 0 26px;
}

.token-list li > .icon {
    width: 12px;
    height: 12px;
    stroke-width: 1.3;
}

.token-list li span {
    flex: 1;
}

.side-footer {
    height: 52px;
    padding: 7px 8px 0;
    border-top: 1px solid #121213;
}

.tools {
    height: 32px;
    display: flex;
    align-items: center;
    gap: 4px;
    margin-left: auto;
    padding: 0 13px;
    border-radius: 8px;
    background-color: #212426;
    font-weight: 500;
}

/* Rulers and canvas */
.viewport {
    display: grid;
    grid-template-columns: 22px 1fr;
    grid-template-rows: 22px 1fr;
    min-width: 0;
    min-height: 0;
}

.ruler-x {
    grid-column: 1 / 3;
    width: 100%;
    height: 22px;
}

.ruler-y {
    width: 22px;
    height: 100%;
}

.viewport text {
    font-size: 11px;
    text-anchor: middle;
    fill: #8f9da3;
}

.tick {
    fill: none;
    stroke: #8f9da3;
}

.range {
    fill: #11524a;
}

.mask {
    fill: #18181a;
}

.fade {
    fill: #18181a;
    opacity: 0.75;
}

.dim {
    opacity: 0.25;
}

.on-range {
    opacity: 0.6;
}

.viewport .bound {
    fill: #00d1b8;
    font-weight: 500;
}

.canvas {
    position: relative;
    overflow: hidden;
    border: 2px solid #2e3434;
    border-radius: 10px;
    background-color: #e8e9ea;
}

.board {
    position: absolute;
    background-color: #fff;
    color: #2f4858;
}

.board-inputs {
    left: 0;
    top: 141px;
    width: 184px;
    height: 588px;
}

.board-comm {
    left: 228px;
    top: 141px;
    width: 588px;
    height: 588px;
}

.board-lower {
    left: 0;
    top: 793px;
    width: 185px;
    height: 588px;
}

.board-appbar {
    left: 229px;
    top: 794px;
    width: 588px;
    height: 588px;
    padding: 25px 0 0 47px;
}

.board h2 {
    font-size: 50px;
    line-height: 56px;
    font-weight: 600;
}

.board-comm h2 {
    padding: 26px 0 0 36px;
    color: #0a0a0a;
}

.board-label {
    position: absolute;
    line-height: 16px;
}

.label-comm {
    left: 228px;
    top: 120px;
}

.label-appbar {
    left: 229px;
    top: 773px;
}

/* Form fields on the inputs board */
.field {
    position: absolute;
    left: -8px;
    width: 161px;
    height: 27px;
    display: flex;
    align-items: center;
    justify-content: flex-end;
    gap: 3px;
    padding-right: 3px;
    border: 2px solid #3f5666;
    border-radius: 6px;
}

.field .icon {
    stroke-width: 1.3;
}

.field-1 { top: 131px; }
.field-2 { top: 181px; }
.field-3 { top: 232px; }
.field-4 { top: 295px; }

.field.error {
    color: #d83a2b;
    border-color: #d83a2b;
}

.field.valid {
    color: #12b424;
    border-color: #12b424;
}

.field-area {
    top: 364px;
    height: 114px;
    align-items: flex-end;
    padding-bottom: 3px;
}

.area-scroll {
    width: 8px;
    height: 90px;
    border: 2px solid #2f4858;
    border-radius: 4px;
}

.area-thumb {
    height: 26px;
    background-color: #2f4858;
}

.lower-shape {
    margin: 100px 0 0 -8px;
    width: 33px;
    height: 77px;
    border: 2px solid #3f5666;
    border-radius: 6px;
}

/* Alerts */
.alert {
    position: absolute;
    left: 35px;
    width: 251px;
    height: 27px;
    display: flex;
    gap: 3px;
    padding: 4px 5px;
    border: 2px solid #103a57;
    border-radius: 6px;
    color: #fff;
    font-size: 10px;
    line-height: 15px;
}

.alert.tall {
    height: 40px;
}

.alert p {
    flex: 1;
    font-weight: 700;
}

.alert small {
    display: block;
    font-size: 8px;
    line-height: 10px;
}

.alert .icon {
    width: 14px;
    height: 14px;
    stroke-width: 1.6;
}

.alert .icon:first-child {
    margin-left: -1px;
    margin-right: 1px;
}

.advice { background-color: #ffb600; }
.positive { background-color: #00ae13; }
.warning { background-color: #cc2e1e; }

.a-1 { top: 120px; }
.a-2 { top: 214px; }
.a-3 { top: 245px; }
.a-4 { top: 308px; }
.a-5 { top: 339px; }

.alert.selected {
    left: 293px;
    top: 160px;
    height: 39px;
    border-color: #8d7080;
    border-radius: 2px;
    outline: 1px solid #b79bd3;
}

.handle {
    position: absolute;
    width: 9px;
    height: 9px;
    border: 1px solid #b07fd6;
    border-radius: 50%;
    background-color: #fff;
}

.tl { left: -6px; top: -6px; }
.tr { right: -6px; top: -6px; }
.bl { left: -6px; bottom: -6px; }
.br { right: -6px; bottom: -6px; }

/* App bars */
.board-appbar h2 {
    margin-left: -11px;
}

.appbar {
    width: 265px;
    height: 46px;
    display: flex;
    align-items: center;
    justify-content: space-between;
    margin-top: 20px;
    padding: 0 12px;
    border: 2px solid #3f5666;
    font-size: 14px;
    font-weight: 600;
}

.appbar + .appbar {
    margin-top: 10px;
}

.menu {
    width: 24px;
    height: 16px;
    stroke: #2f4858;
    stroke-width: 2;
}

.face {
    width: 24px;
    height: 24px;
}

/* Floating toolbar */
.toolbar {
    position: absolute;
    top: 4px;
    left: 420px;
    width: 396px;
    height: 56px;
    display: flex;
    flex-direction: column;
    align-items: center;
    padding-top: 8px;
    border: 2px solid #2e3434;
    border-radius: 8px;
    background-color: #18181a;
}

.tool-row {
    display: flex;
    gap: 4px;
}

.tool-row button {
    width: 36px;
    height: 36px;
    display: grid;
    place-items: center;
    border-radius: 8px;
}

.tool-row .active {
    background-color: #2e3434;
    color: #7efff5;
}

.grip {
    width: 64px;
    height: 4px;
    border-radius: 2px;
    background-color: #2e3434;
}

.palette {
    position: absolute;
    left: 3px;
    bottom: 2px;
    width: 88px;
    height: 72px;
    display: flex;
    align-items: center;
    padding-left: 7px;
    border: 2px solid #2e3434;
    border-radius: 8px;
    background-color: #18181a;
}

.palette button {
    width: 34px;
    height: 34px;
}

.palette .icon {
    width: 12px;
    height: 12px;
    stroke-width: 1.3;
}

.grip-v {
    width: 4px;
    height: 40px;
    margin-left: 2px;
    border-radius: 2px;
    background-color: #2e3434;
}

.scroll-y {
    position: absolute;
    right: 1px;
    top: 304px;
    width: 7px;
    height: 458px;
    border-radius: 3px;
    background-color: #8c8e8d;
}

.scroll-x {
    position: absolute;
    right: 12px;
    bottom: 1px;
    width: 343px;
    height: 7px;
    border-radius: 3px;
    background-color: #8c8e8d;
}

/* Right sidebar */
.right-sidebar {
    position: relative;
    display: flex;
    flex-direction: column;
    min-height: 0;
}

.user-header {
    height: 48px;
    display: flex;
    align-items: center;
    gap: 4px;
    padding: 0 6px 0 14px;
}

.avatar {
    width: 24px;
    height: 24px;
    margin-right: auto;
    border: 2px solid #000;
    border-radius: 12px;
    background-color: #dbe55f;
    color: #3c4010;
    line-height: 20px;
    text-align: center;
}

.zoom {
    padding: 3px 12px 0 0;
}

.design-scroll {
    flex: 1;
    min-height: 0;
    display: flex;
    justify-content: space-between;
    overflow: hidden;
}

.design {
    width: 284px;
    display: flex;
    flex-direction: column;
    gap: 4px;
    margin: 8px 0 0 12px;
}

.row {
    display: grid;
    grid-template-columns: repeat(8, 32px);
    gap: 4px;
    flex: none;
}

.blend {
    margin: 4px 0 12px;
}

.span-2 { grid-column: span 2; }
.span-4 { grid-column: span 4; }
.span-5 { grid-column: span 5; }
.span-7 { grid-column: span 7; }

.select {
    display: grid;
    align-items: center;
    height: 32px;
    border-radius: 8px;
    background-color: #212426;
    color: #fff;
}

.select select {
    grid-area: 1 / 1;
    width: 100%;
    height: 32px;
    padding: 0 0 1px 8px;
    appearance: none;
}

.select .icon {
    grid-area: 1 / 1;
    justify-self: end;
    margin-right: 8px;
    color: #8f9da3;
    pointer-events: none;
}

.input, .hex-value, .hex-opacity {
    flex: 1;
    height: 32px;
    display: flex;
    align-items: center;
    gap: 6px;
    padding-left: 9px;
    border-radius: 8px;
    background-color: #212426;
}

.input input, .hex input {
    flex: 1;
    width: 100%;
    color: #fff;
    font-size: 14px;
}

.pair {
    display: flex;
    gap: 4px;
}

.switch {
    display: flex;
    border-radius: 8px;
    background-color: #212426;
    justify-content: space-between;
}

.switch button {
    width: 32px;
    height: 32px;
    display: grid;
    place-items: center;
    border-radius: 8px;
}

.switch .active {
    background-color: #2e3434;
    color: #7efff5;
}

.title {
    height: 32px;
    display: flex;
    align-items: center;
    gap: 4px;
    flex: none;
    padding-left: 10px;
    margin-top: 4px;
}

.title > .icon {
    margin-left: -6px;
}

.title h2 {
    flex: 1;
    padding-bottom: 1px;
}

.after-measures {
    margin-top: 20px;
}

.copy {
    padding-right: 8px;
}

.component {
    display: flex;
    gap: 2px;
    height: 54px;
    margin-top: -4px;
    flex: none;
}

.component-name {
    flex: 1;
    display: flex;
    gap: 6px;
    padding: 6px 8px;
    border-radius: 8px 0 0 8px;
    background-color: #212426;
    line-height: 21px;
}

.component-name .icon {
    margin-top: 4px;
}

.component-name p {
    color: #fff;
}

.component-name span {
    display: block;
    color: #8f9da3;
}

.component button {
    width: 28px;
    display: grid;
    place-items: center;
    border-radius: 0 8px 8px 0;
    background-color: #212426;
}

.constraints {
    display: flex;
    gap: 4px;
    margin-top: -4px;
    flex: none;
}

.constraint-box {
    width: 108px;
    height: 108px;
    display: grid;
    grid-template-columns: 24px 60px 24px;
    grid-template-rows: 24px 60px 24px;
    grid-template-areas: ". top ." "left middle right" ". bottom .";
    place-items: center;
    border-radius: 8px;
    background-color: #212426;
}

.bar-h, .bar-v {
    border: 4px solid #212426;
    border-radius: 6px;
    background-color: #8f9da3;
}

.bar-h {
    width: 40px;
    height: 11px;
}

.bar-v {
    width: 11px;
    height: 40px;
}

.top { grid-area: top; }
.left { grid-area: left; }
.right { grid-area: right; }
.bottom { grid-area: bottom; }

.on {
    border-color: #426158;
    background-color: #7efff5;
}

.middle {
    grid-area: middle;
    width: 60px;
    height: 60px;
    display: grid;
    place-items: center;
    border-radius: 8px;
    background-color: #18181a;
}

.middle svg {
    width: 32px;
    stroke: #8f9da3;
    stroke-width: 3;
    stroke-linecap: round;
}

.constraint-options {
    width: 124px;
}

.fix {
    display: flex;
    align-items: center;
    gap: 2px;
    height: 32px;
    white-space: nowrap;
}

.fix input {
    width: 16px;
    height: 16px;
    flex: none;
    appearance: none;
    border-radius: 6px;
    background-color: #8f9da3;
}

.colors {
    display: flex;
    flex-direction: column;
    gap: 4px;
    flex: none;
    margin-bottom: 8px;
}

.color-name {
    display: flex;
    align-items: center;
    gap: 13px;
    height: 32px;
    margin-right: 2px;
    padding-left: 10px;
    border-radius: 8px;
    background-color: #212426;
    color: #fff;
}

.dot {
    width: 14px;
    height: 14px;
    border-radius: 7px;
}

.dot.white {
    background-color: #fff;
}

.hex {
    display: flex;
    gap: 2px;
}

.hex-value {
    border-radius: 8px 0 0 8px;
}

.hex-opacity {
    flex: 0 0 60px;
    gap: 4px;
    border-radius: 0 8px 8px 0;
}

.square {
    width: 16px;
    height: 16px;
    flex: none;
    border: 1px solid #2e3434;
    border-radius: 4px;
    background-color: #103a57;
}

.more {
    height: 32px;
    border-radius: 8px;
    background-color: #212426;
    font-size: 11px;
    font-weight: 500;
}

.scrollbar {
    width: 10px;
    display: flex;
    flex-direction: column;
    align-items: center;
    padding: 2px 2px 4px 0;
}

.thumb {
    flex: 803;
    width: 6px;
    margin: 4px 0 88px;
    border-radius: 3px;
    background-color: #7b868b;
}

.arrow-up, .arrow-down {
    border: 3px solid transparent;
    border-bottom: 6px solid #7b868b;
    border-top: none;
}

.arrow-down {
    border-bottom: none;
    border-top: 6px solid #7b868b;
}

/* Watermark over the panel */
.watermark {
    position: absolute;
    right: 34px;
    bottom: 34px;
    display: flex;
    gap: 12px;
    height: 53px;
    opacity: 0.6;
    pointer-events: none;
}

.watermark span {
    font-family: "DejaVu Sans", sans-serif;
    font-size: 56px;
    line-height: 38px;
    color: #dcdcdc;
}
```
